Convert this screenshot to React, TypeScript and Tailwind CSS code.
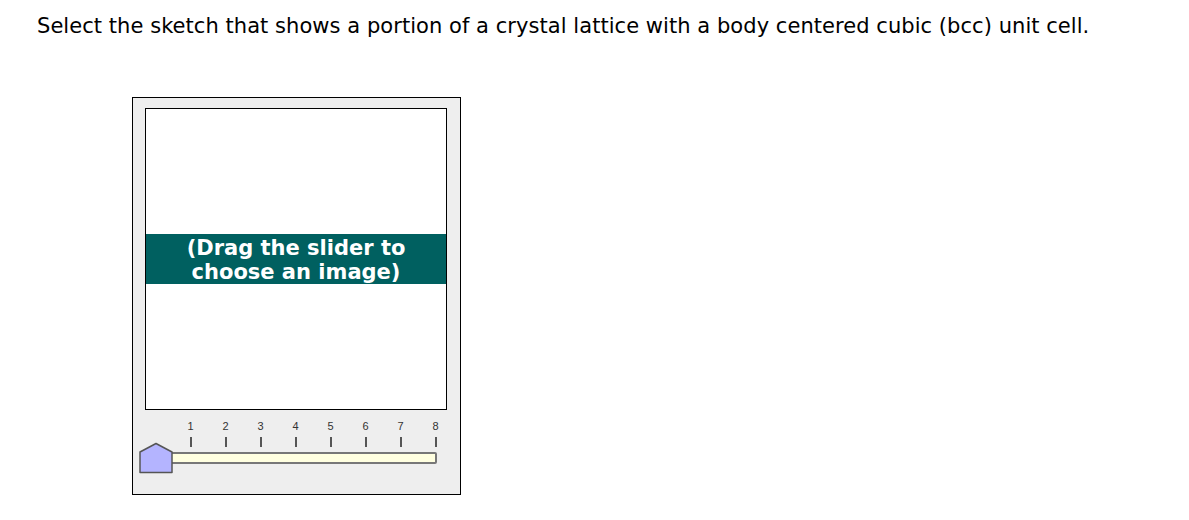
const ticks = [1, 2, 3, 4, 5, 6, 7, 8]

function Thumb() {
  return (
    <svg width="34" height="32" viewBox="0 0 34 32" className="absolute left-[6px] top-[32px]">
      <polygon
        points="1,10 17,1.5 33,10 33,30.5 1,30.5"
        fill="#b4b4ff"
        stroke="#555555"
        strokeWidth="1.5"
        strokeLinejoin="round"
      />
    </svg>
  )
}

export default function App() {
  return (
    <div className="min-h-[520px] bg-white font-['DejaVu_Sans',Verdana,sans-serif] text-black">
      <p className="pl-[37px] pt-[12px] text-[21px] leading-[28px] tracking-[0.05px]">
        Select the sketch that shows a portion of a crystal lattice with a body centered cubic (bcc) unit cell.
      </p>

      <div className="ml-[132px] mt-[57px] h-[398px] w-[329px] border border-black bg-[#eeeeee]">
        {/* image frame */}
        <div className="ml-[12px] mt-[10px] flex h-[302px] w-[302px] flex-col justify-center border border-black bg-white">
          <div className="flex h-[50px] flex-col items-center pt-[2px] bg-[#006060] text-[21px] font-bold leading-[24px] text-white">
            <span>(Drag the slider to</span>
            <span>choose an image)</span>
          </div>
        </div>

        {/* slider */}
        <div className="relative h-[80px]">
          <div className="ml-[40px] flex pt-[10px]">
            {ticks.map((n) => (
              <div key={n} className="flex w-[35px] flex-col items-center">
                <span className="font-['Liberation_Sans',Arial,sans-serif] text-[11px] leading-[12px] text-[#333333]">{n}</span>
                <div className="mt-[5px] h-[10px] w-[2px] bg-[#555555]" />
              </div>
            ))}
          </div>
          <div className="ml-[37px] mt-[5px] h-[12px] w-[267px] rounded-[2px] border-2 border-[#777777] bg-[#ffffe0]" />
          <Thumb />
        </div>
      </div>
    </div>
  )
}
